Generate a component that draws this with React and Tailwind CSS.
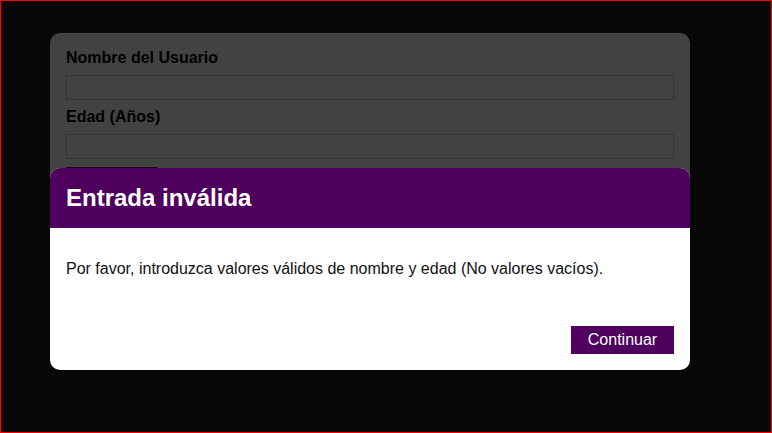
import React from "react";

const font = { fontFamily: '"Liberation Sans", Arial, sans-serif' };

// Form card that sits behind the modal
const AddUserCard = () => (
  <div className="ml-[49px] mt-[32px] w-[640px] rounded-[10px] bg-white p-4">
    <form>
      <label className="mb-2 block text-base font-bold leading-[18px] text-black">
        Nombre del Usuario
      </label>
      <input
        type="text"
        className="mb-2 block h-[25px] w-full border border-[#ccc] bg-white px-1"
      />
      <label className="mb-2 block text-base font-bold leading-[18px] text-black">
        Edad (Años)
      </label>
      <input
        type="number"
        className="mb-2 block h-[25px] w-full border border-[#ccc] bg-white px-1"
      />
      {/* submit button, covered by the modal */}
      <button
        type="submit"
        aria-label="Añadir usuario"
        className="block h-[28px] w-[91px] border border-[#4f005f] bg-[#4f005f]"
      />
    </form>
  </div>
);

// Error modal
const ErrorModal = ({ title, message, onConfirm }) => (
  <div className="absolute left-[49px] top-[167px] w-[640px] overflow-hidden rounded-[10px] bg-white shadow-md">
    <header className="flex h-[60px] items-center bg-[#4f005f] px-4">
      <h2 className="text-2xl font-bold leading-[28px] text-white">{title}</h2>
    </header>
    <div className="px-4 pt-8 pb-8">
      <p className="text-base leading-[18px] text-[#111]">{message}</p>
    </div>
    <footer className="flex justify-end px-4 pt-4 pb-4">
      <button
        onClick={onConfirm}
        className="h-[28px] w-[103px] border border-[#4f005f] bg-[#4f005f] text-base leading-[18px] text-white"
      >
        Continuar
      </button>
    </footer>
  </div>
);

export default function App() {
  return (
    <div
      className="relative h-[433px] w-[772px] overflow-hidden border border-[#ff0000] bg-[#1f1f1f]"
      style={font}
    >
      <AddUserCard />
      {/* Backdrop */}
      <div className="absolute inset-0 bg-black/[0.74]" />
      <ErrorModal
        title="Entrada inválida"
        message="Por favor, introduzca valores válidos de nombre y edad (No valores vacíos)."
        onConfirm={() => {}}
      />
    </div>
  );
}
